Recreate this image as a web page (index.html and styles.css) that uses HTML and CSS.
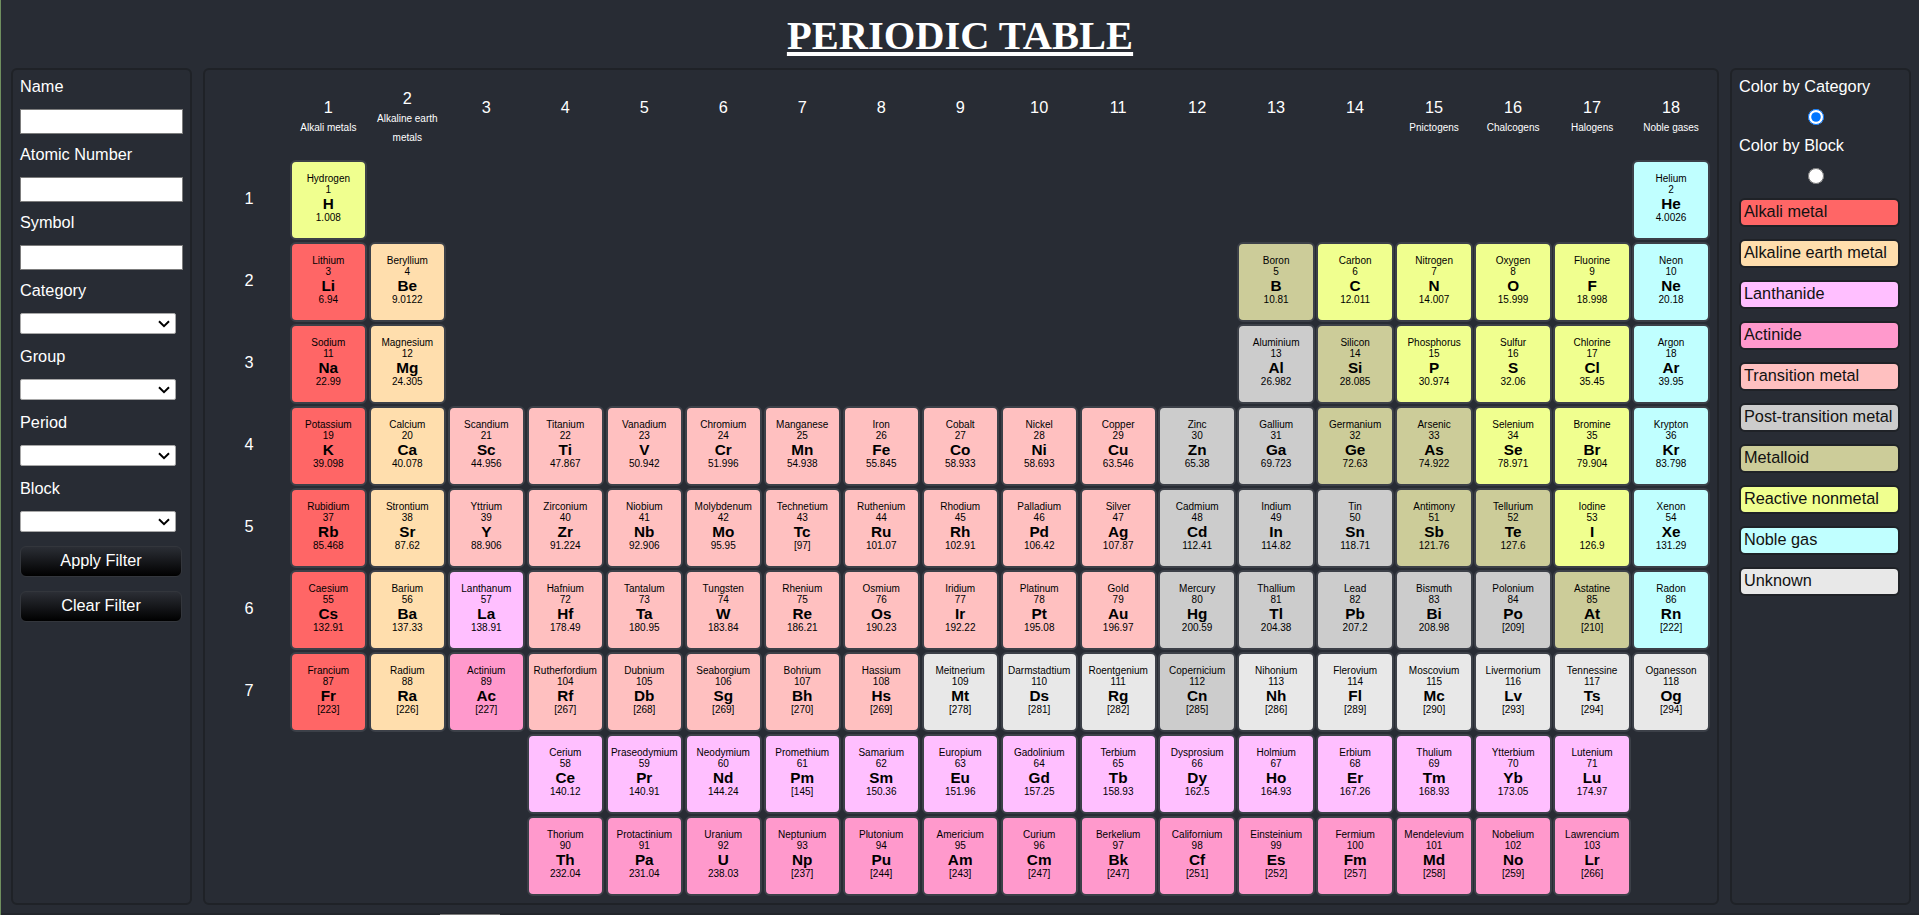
FILE: index.html
```html
<!DOCTYPE html>
<html lang="en">
<head>
<meta charset="utf-8">
<title>Periodic Table</title>
<link rel="stylesheet" href="styles.css">
</head>
<body>
<div class="app">
<h1 class="title">PERIODIC TABLE</h1>
<main class="layout">
<aside class="panel filters">
<label class="flabel">Name</label><input class="tinput" type="text">
<label class="flabel">Atomic Number</label><input class="tinput" type="text">
<label class="flabel">Symbol</label><input class="tinput" type="text">
<label class="flabel">Category</label><select class="sel"><option></option></select>
<label class="flabel slabel">Group</label><select class="sel"><option></option></select>
<label class="flabel slabel">Period</label><select class="sel"><option></option></select>
<label class="flabel slabel">Block</label><select class="sel"><option></option></select>
<button class="btn" type="button">Apply Filter</button>
<button class="btn" type="button">Clear Filter</button>
</aside>
<section class="panel tablepanel">
<div class="ptable">
<div class="gap"></div>
<div class="gh"><span class="gn">1</span><span class="gs">Alkali metals</span></div>
<div class="gh"><span class="gn">2</span><span class="gs">Alkaline earth metals</span></div>
<div class="gh"><span class="gn">3</span><span class="gs"></span></div>
<div class="gh"><span class="gn">4</span><span class="gs"></span></div>
<div class="gh"><span class="gn">5</span><span class="gs"></span></div>
<div class="gh"><span class="gn">6</span><span class="gs"></span></div>
<div class="gh"><span class="gn">7</span><span class="gs"></span></div>
<div class="gh"><span class="gn">8</span><span class="gs"></span></div>
<div class="gh"><span class="gn">9</span><span class="gs"></span></div>
<div class="gh"><span class="gn">10</span><span class="gs"></span></div>
<div class="gh"><span class="gn">11</span><span class="gs"></span></div>
<div class="gh"><span class="gn">12</span><span class="gs"></span></div>
<div class="gh"><span class="gn">13</span><span class="gs"></span></div>
<div class="gh"><span class="gn">14</span><span class="gs"></span></div>
<div class="gh"><span class="gn">15</span><span class="gs">Pnictogens</span></div>
<div class="gh"><span class="gn">16</span><span class="gs">Chalcogens</span></div>
<div class="gh"><span class="gn">17</span><span class="gs">Halogens</span></div>
<div class="gh"><span class="gn">18</span><span class="gs">Noble gases</span></div>

<div class="pn">1</div>
<div class="cell reactive"><span class="nm">Hydrogen</span><span class="nm">1</span><b class="sy">H</b><span class="nm">1.008</span></div>
<div class="gap span16"></div>
<div class="cell noble"><span class="nm">Helium</span><span class="nm">2</span><b class="sy">He</b><span class="nm">4.0026</span></div>

<div class="pn">2</div>
<div class="cell alkali"><span class="nm">Lithium</span><span class="nm">3</span><b class="sy">Li</b><span class="nm">6.94</span></div>
<div class="cell alkaline"><span class="nm">Beryllium</span><span class="nm">4</span><b class="sy">Be</b><span class="nm">9.0122</span></div>
<div class="gap span10"></div>
<div class="cell metalloid"><span class="nm">Boron</span><span class="nm">5</span><b class="sy">B</b><span class="nm">10.81</span></div>
<div class="cell reactive"><span class="nm">Carbon</span><span class="nm">6</span><b class="sy">C</b><span class="nm">12.011</span></div>
<div class="cell reactive"><span class="nm">Nitrogen</span><span class="nm">7</span><b class="sy">N</b><span class="nm">14.007</span></div>
<div class="cell reactive"><span class="nm">Oxygen</span><span class="nm">8</span><b class="sy">O</b><span class="nm">15.999</span></div>
<div class="cell reactive"><span class="nm">Fluorine</span><span class="nm">9</span><b class="sy">F</b><span class="nm">18.998</span></div>
<div class="cell noble"><span class="nm">Neon</span><span class="nm">10</span><b class="sy">Ne</b><span class="nm">20.18</span></div>

<div class="pn">3</div>
<div class="cell alkali"><span class="nm">Sodium</span><span class="nm">11</span><b class="sy">Na</b><span class="nm">22.99</span></div>
<div class="cell alkaline"><span class="nm">Magnesium</span><span class="nm">12</span><b class="sy">Mg</b><span class="nm">24.305</span></div>
<div class="gap span10"></div>
<div class="cell post"><span class="nm">Aluminium</span><span class="nm">13</span><b class="sy">Al</b><span class="nm">26.982</span></div>
<div class="cell metalloid"><span class="nm">Silicon</span><span class="nm">14</span><b class="sy">Si</b><span class="nm">28.085</span></div>
<div class="cell reactive"><span class="nm">Phosphorus</span><span class="nm">15</span><b class="sy">P</b><span class="nm">30.974</span></div>
<div class="cell reactive"><span class="nm">Sulfur</span><span class="nm">16</span><b class="sy">S</b><span class="nm">32.06</span></div>
<div class="cell reactive"><span class="nm">Chlorine</span><span class="nm">17</span><b class="sy">Cl</b><span class="nm">35.45</span></div>
<div class="cell noble"><span class="nm">Argon</span><span class="nm">18</span><b class="sy">Ar</b><span class="nm">39.95</span></div>

<div class="pn">4</div>
<div class="cell alkali"><span class="nm">Potassium</span><span class="nm">19</span><b class="sy">K</b><span class="nm">39.098</span></div>
<div class="cell alkaline"><span class="nm">Calcium</span><span class="nm">20</span><b class="sy">Ca</b><span class="nm">40.078</span></div>
<div class="cell transition"><span class="nm">Scandium</span><span class="nm">21</span><b class="sy">Sc</b><span class="nm">44.956</span></div>
<div class="cell transition"><span class="nm">Titanium</span><span class="nm">22</span><b class="sy">Ti</b><span class="nm">47.867</span></div>
<div class="cell transition"><span class="nm">Vanadium</span><span class="nm">23</span><b class="sy">V</b><span class="nm">50.942</span></div>
<div class="cell transition"><span class="nm">Chromium</span><span class="nm">24</span><b class="sy">Cr</b><span class="nm">51.996</span></div>
<div class="cell transition"><span class="nm">Manganese</span><span class="nm">25</span><b class="sy">Mn</b><span class="nm">54.938</span></div>
<div class="cell transition"><span class="nm">Iron</span><span class="nm">26</span><b class="sy">Fe</b><span class="nm">55.845</span></div>
<div class="cell transition"><span class="nm">Cobalt</span><span class="nm">27</span><b class="sy">Co</b><span class="nm">58.933</span></div>
<div class="cell transition"><span class="nm">Nickel</span><span class="nm">28</span><b class="sy">Ni</b><span class="nm">58.693</span></div>
<div class="cell transition"><span class="nm">Copper</span><span class="nm">29</span><b class="sy">Cu</b><span class="nm">63.546</span></div>
<div class="cell post"><span class="nm">Zinc</span><span class="nm">30</span><b class="sy">Zn</b><span class="nm">65.38</span></div>
<div class="cell post"><span class="nm">Gallium</span><span class="nm">31</span><b class="sy">Ga</b><span class="nm">69.723</span></div>
<div class="cell metalloid"><span class="nm">Germanium</span><span class="nm">32</span><b class="sy">Ge</b><span class="nm">72.63</span></div>
<div class="cell metalloid"><span class="nm">Arsenic</span><span class="nm">33</span><b class="sy">As</b><span class="nm">74.922</span></div>
<div class="cell reactive"><span class="nm">Selenium</span><span class="nm">34</span><b class="sy">Se</b><span class="nm">78.971</span></div>
<div class="cell reactive"><span class="nm">Bromine</span><span class="nm">35</span><b class="sy">Br</b><span class="nm">79.904</span></div>
<div class="cell noble"><span class="nm">Krypton</span><span class="nm">36</span><b class="sy">Kr</b><span class="nm">83.798</span></div>

<div class="pn">5</div>
<div class="cell alkali"><span class="nm">Rubidium</span><span class="nm">37</span><b class="sy">Rb</b><span class="nm">85.468</span></div>
<div class="cell alkaline"><span class="nm">Strontium</span><span class="nm">38</span><b class="sy">Sr</b><span class="nm">87.62</span></div>
<div class="cell transition"><span class="nm">Yttrium</span><span class="nm">39</span><b class="sy">Y</b><span class="nm">88.906</span></div>
<div class="cell transition"><span class="nm">Zirconium</span><span class="nm">40</span><b class="sy">Zr</b><span class="nm">91.224</span></div>
<div class="cell transition"><span class="nm">Niobium</span><span class="nm">41</span><b class="sy">Nb</b><span class="nm">92.906</span></div>
<div class="cell transition"><span class="nm">Molybdenum</span><span class="nm">42</span><b class="sy">Mo</b><span class="nm">95.95</span></div>
<div class="cell transition"><span class="nm">Technetium</span><span class="nm">43</span><b class="sy">Tc</b><span class="nm">[97]</span></div>
<div class="cell transition"><span class="nm">Ruthenium</span><span class="nm">44</span><b class="sy">Ru</b><span class="nm">101.07</span></div>
<div class="cell transition"><span class="nm">Rhodium</span><span class="nm">45</span><b class="sy">Rh</b><span class="nm">102.91</span></div>
<div class="cell transition"><span class="nm">Palladium</span><span class="nm">46</span><b class="sy">Pd</b><span class="nm">106.42</span></div>
<div class="cell transition"><span class="nm">Silver</span><span class="nm">47</span><b class="sy">Ag</b><span class="nm">107.87</span></div>
<div class="cell post"><span class="nm">Cadmium</span><span class="nm">48</span><b class="sy">Cd</b><span class="nm">112.41</span></div>
<div class="cell post"><span class="nm">Indium</span><span class="nm">49</span><b class="sy">In</b><span class="nm">114.82</span></div>
<div class="cell post"><span class="nm">Tin</span><span class="nm">50</span><b class="sy">Sn</b><span class="nm">118.71</span></div>
<div class="cell metalloid"><span class="nm">Antimony</span><span class="nm">51</span><b class="sy">Sb</b><span class="nm">121.76</span></div>
<div class="cell metalloid"><span class="nm">Tellurium</span><span class="nm">52</span><b class="sy">Te</b><span class="nm">127.6</span></div>
<div class="cell reactive"><span class="nm">Iodine</span><span class="nm">53</span><b class="sy">I</b><span class="nm">126.9</span></div>
<div class="cell noble"><span class="nm">Xenon</span><span class="nm">54</span><b class="sy">Xe</b><span class="nm">131.29</span></div>

<div class="pn">6</div>
<div class="cell alkali"><span class="nm">Caesium</span><span class="nm">55</span><b class="sy">Cs</b><span class="nm">132.91</span></div>
<div class="cell alkaline"><span class="nm">Barium</span><span class="nm">56</span><b class="sy">Ba</b><span class="nm">137.33</span></div>
<div class="cell lanthanide"><span class="nm">Lanthanum</span><span class="nm">57</span><b class="sy">La</b><span class="nm">138.91</span></div>
<div class="cell transition"><span class="nm">Hafnium</span><span class="nm">72</span><b class="sy">Hf</b><span class="nm">178.49</span></div>
<div class="cell transition"><span class="nm">Tantalum</span><span class="nm">73</span><b class="sy">Ta</b><span class="nm">180.95</span></div>
<div class="cell transition"><span class="nm">Tungsten</span><span class="nm">74</span><b class="sy">W</b><span class="nm">183.84</span></div>
<div class="cell transition"><span class="nm">Rhenium</span><span class="nm">75</span><b class="sy">Re</b><span class="nm">186.21</span></div>
<div class="cell transition"><span class="nm">Osmium</span><span class="nm">76</span><b class="sy">Os</b><span class="nm">190.23</span></div>
<div class="cell transition"><span class="nm">Iridium</span><span class="nm">77</span><b class="sy">Ir</b><span class="nm">192.22</span></div>
<div class="cell transition"><span class="nm">Platinum</span><span class="nm">78</span><b class="sy">Pt</b><span class="nm">195.08</span></div>
<div class="cell transition"><span class="nm">Gold</span><span class="nm">79</span><b class="sy">Au</b><span class="nm">196.97</span></div>
<div class="cell post"><span class="nm">Mercury</span><span class="nm">80</span><b class="sy">Hg</b><span class="nm">200.59</span></div>
<div class="cell post"><span class="nm">Thallium</span><span class="nm">81</span><b class="sy">Tl</b><span class="nm">204.38</span></div>
<div class="cell post"><span class="nm">Lead</span><span class="nm">82</span><b class="sy">Pb</b><span class="nm">207.2</span></div>
<div class="cell post"><span class="nm">Bismuth</span><span class="nm">83</span><b class="sy">Bi</b><span class="nm">208.98</span></div>
<div class="cell post"><span class="nm">Polonium</span><span class="nm">84</span><b class="sy">Po</b><span class="nm">[209]</span></div>
<div class="cell metalloid"><span class="nm">Astatine</span><span class="nm">85</span><b class="sy">At</b><span class="nm">[210]</span></div>
<div class="cell noble"><span class="nm">Radon</span><span class="nm">86</span><b class="sy">Rn</b><span class="nm">[222]</span></div>

<div class="pn">7</div>
<div class="cell alkali"><span class="nm">Francium</span><span class="nm">87</span><b class="sy">Fr</b><span class="nm">[223]</span></div>
<div class="cell alkaline"><span class="nm">Radium</span><span class="nm">88</span><b class="sy">Ra</b><span class="nm">[226]</span></div>
<div class="cell actinide"><span class="nm">Actinium</span><span class="nm">89</span><b class="sy">Ac</b><span class="nm">[227]</span></div>
<div class="cell transition"><span class="nm">Rutherfordium</span><span class="nm">104</span><b class="sy">Rf</b><span class="nm">[267]</span></div>
<div class="cell transition"><span class="nm">Dubnium</span><span class="nm">105</span><b class="sy">Db</b><span class="nm">[268]</span></div>
<div class="cell transition"><span class="nm">Seaborgium</span><span class="nm">106</span><b class="sy">Sg</b><span class="nm">[269]</span></div>
<div class="cell transition"><span class="nm">Bohrium</span><span class="nm">107</span><b class="sy">Bh</b><span class="nm">[270]</span></div>
<div class="cell transition"><span class="nm">Hassium</span><span class="nm">108</span><b class="sy">Hs</b><span class="nm">[269]</span></div>
<div class="cell unknown"><span class="nm">Meitnerium</span><span class="nm">109</span><b class="sy">Mt</b><span class="nm">[278]</span></div>
<div class="cell unknown"><span class="nm">Darmstadtium</span><span class="nm">110</span><b class="sy">Ds</b><span class="nm">[281]</span></div>
<div class="cell unknown"><span class="nm">Roentgenium</span><span class="nm">111</span><b class="sy">Rg</b><span class="nm">[282]</span></div>
<div class="cell post"><span class="nm">Copernicium</span><span class="nm">112</span><b class="sy">Cn</b><span class="nm">[285]</span></div>
<div class="cell unknown"><span class="nm">Nihonium</span><span class="nm">113</span><b class="sy">Nh</b><span class="nm">[286]</span></div>
<div class="cell unknown"><span class="nm">Flerovium</span><span class="nm">114</span><b class="sy">Fl</b><span class="nm">[289]</span></div>
<div class="cell unknown"><span class="nm">Moscovium</span><span class="nm">115</span><b class="sy">Mc</b><span class="nm">[290]</span></div>
<div class="cell unknown"><span class="nm">Livermorium</span><span class="nm">116</span><b class="sy">Lv</b><span class="nm">[293]</span></div>
<div class="cell unknown"><span class="nm">Tennessine</span><span class="nm">117</span><b class="sy">Ts</b><span class="nm">[294]</span></div>
<div class="cell unknown"><span class="nm">Oganesson</span><span class="nm">118</span><b class="sy">Og</b><span class="nm">[294]</span></div>

<div class="gap span4"></div>
<div class="cell lanthanide"><span class="nm">Cerium</span><span class="nm">58</span><b class="sy">Ce</b><span class="nm">140.12</span></div>
<div class="cell lanthanide"><span class="nm">Praseodymium</span><span class="nm">59</span><b class="sy">Pr</b><span class="nm">140.91</span></div>
<div class="cell lanthanide"><span class="nm">Neodymium</span><span class="nm">60</span><b class="sy">Nd</b><span class="nm">144.24</span></div>
<div class="cell lanthanide"><span class="nm">Promethium</span><span class="nm">61</span><b class="sy">Pm</b><span class="nm">[145]</span></div>
<div class="cell lanthanide"><span class="nm">Samarium</span><span class="nm">62</span><b class="sy">Sm</b><span class="nm">150.36</span></div>
<div class="cell lanthanide"><span class="nm">Europium</span><span class="nm">63</span><b class="sy">Eu</b><span class="nm">151.96</span></div>
<div class="cell lanthanide"><span class="nm">Gadolinium</span><span class="nm">64</span><b class="sy">Gd</b><span class="nm">157.25</span></div>
<div class="cell lanthanide"><span class="nm">Terbium</span><span class="nm">65</span><b class="sy">Tb</b><span class="nm">158.93</span></div>
<div class="cell lanthanide"><span class="nm">Dysprosium</span><span class="nm">66</span><b class="sy">Dy</b><span class="nm">162.5</span></div>
<div class="cell lanthanide"><span class="nm">Holmium</span><span class="nm">67</span><b class="sy">Ho</b><span class="nm">164.93</span></div>
<div class="cell lanthanide"><span class="nm">Erbium</span><span class="nm">68</span><b class="sy">Er</b><span class="nm">167.26</span></div>
<div class="cell lanthanide"><span class="nm">Thulium</span><span class="nm">69</span><b class="sy">Tm</b><span class="nm">168.93</span></div>
<div class="cell lanthanide"><span class="nm">Ytterbium</span><span class="nm">70</span><b class="sy">Yb</b><span class="nm">173.05</span></div>
<div class="cell lanthanide"><span class="nm">Lutenium</span><span class="nm">71</span><b class="sy">Lu</b><span class="nm">174.97</span></div>
<div class="gap"></div>

<div class="gap span4"></div>
<div class="cell actinide"><span class="nm">Thorium</span><span class="nm">90</span><b class="sy">Th</b><span class="nm">232.04</span></div>
<div class="cell actinide"><span class="nm">Protactinium</span><span class="nm">91</span><b class="sy">Pa</b><span class="nm">231.04</span></div>
<div class="cell actinide"><span class="nm">Uranium</span><span class="nm">92</span><b class="sy">U</b><span class="nm">238.03</span></div>
<div class="cell actinide"><span class="nm">Neptunium</span><span class="nm">93</span><b class="sy">Np</b><span class="nm">[237]</span></div>
<div class="cell actinide"><span class="nm">Plutonium</span><span class="nm">94</span><b class="sy">Pu</b><span class="nm">[244]</span></div>
<div class="cell actinide"><span class="nm">Americium</span><span class="nm">95</span><b class="sy">Am</b><span class="nm">[243]</span></div>
<div class="cell actinide"><span class="nm">Curium</span><span class="nm">96</span><b class="sy">Cm</b><span class="nm">[247]</span></div>
<div class="cell actinide"><span class="nm">Berkelium</span><span class="nm">97</span><b class="sy">Bk</b><span class="nm">[247]</span></div>
<div class="cell actinide"><span class="nm">Californium</span><span class="nm">98</span><b class="sy">Cf</b><span class="nm">[251]</span></div>
<div class="cell actinide"><span class="nm">Einsteinium</span><span class="nm">99</span><b class="sy">Es</b><span class="nm">[252]</span></div>
<div class="cell actinide"><span class="nm">Fermium</span><span class="nm">100</span><b class="sy">Fm</b><span class="nm">[257]</span></div>
<div class="cell actinide"><span class="nm">Mendelevium</span><span class="nm">101</span><b class="sy">Md</b><span class="nm">[258]</span></div>
<div class="cell actinide"><span class="nm">Nobelium</span><span class="nm">102</span><b class="sy">No</b><span class="nm">[259]</span></div>
<div class="cell actinide"><span class="nm">Lawrencium</span><span class="nm">103</span><b class="sy">Lr</b><span class="nm">[266]</span></div>
</div>
</section>
<aside class="panel legend">
<label class="flabel">Color by Category</label>
<div class="radiorow"><input class="radio" type="radio" name="colorby" checked></div>
<label class="flabel">Color by Block</label>
<div class="radiorow"><input class="radio" type="radio" name="colorby"></div>
<div class="key alkali first">Alkali metal</div>
<div class="key alkaline">Alkaline earth metal</div>
<div class="key lanthanide">Lanthanide</div>
<div class="key actinide">Actinide</div>
<div class="key transition">Transition metal</div>
<div class="key post">Post-transition metal</div>
<div class="key metalloid">Metalloid</div>
<div class="key reactive">Reactive nonmetal</div>
<div class="key noble">Noble gas</div>
<div class="key unknown">Unknown</div>
</aside>
</main>
</div>
<div class="pagebar"><div class="pagethumb"></div></div>
</body>
</html>
```
FILE: styles.css
```css
* { box-sizing: border-box; }
html, body { margin: 0; height: 100%; }
body {
  position: relative;
  background: #282c34;
  color: #fff;
  font-family: "Liberation Sans", Arial, sans-serif;
  font-size: 16.3px;
  overflow: hidden;
  border-left: 1px solid #6f8f5f;
}
.app { display: flex; flex-direction: column; height: 915px; }
.title {
  margin: 0;
  height: 68px;
  padding-top: 13px;
  text-align: center;
  font-family: "Liberation Serif", "Times New Roman", serif;
  font-size: 40.5px;
  font-weight: 700;
  line-height: 46px;
  text-decoration: underline;
  text-decoration-thickness: 4px;
  text-underline-offset: 3px;
}
.layout {
  flex: 1;
  display: grid;
  grid-template-columns: 180.5px 1516px 181px;
  column-gap: 11px;
  padding: 0 0 10px 10px;
  min-height: 0;
}
.panel { border: 2px solid #1f2227; border-radius: 6px; }
.filters { display: flex; flex-direction: column; align-items: flex-start; padding: 8px 7px 0; }
.flabel { display: block; line-height: 16px; height: 18px; }
.tinput {
  display: block;
  width: 163px;
  height: 25px;
  margin: 13px 0 12px;
  padding: 1px 2px;
  background: #fff;
  border: 1px solid #7c7c7c;
  border-radius: 0;
}
.sel {
  display: block;
  width: 156px;
  height: 21px;
  margin: 13px 0 0;
  padding: 0 2px;
  color: #000;
  -webkit-appearance: none;
  appearance: none;
  background-color: #fff;
  background-image: url("data:image/svg+xml;utf8,<svg xmlns='http://www.w3.org/2000/svg' width='12' height='8' viewBox='0 0 12 8'><path d='M1 1.2 L6 6.2 L11 1.2' fill='none' stroke='black' stroke-width='2'/></svg>");
  background-repeat: no-repeat;
  background-position: right 5.5px center;
  border: 1px solid #a8a8a8;
  border-radius: 2px;
}
.slabel { margin-top: 14px; }
.btn {
  display: block;
  width: 162px;
  height: 31px;
  margin-top: 14px;
  padding: 0 0 2px;
  color: #fff;
  font-family: inherit;
  font-size: 16.3px;
  background: linear-gradient(#2b2e35, #000);
  border: 1px solid #33363c;
  border-radius: 6px;
}
.tablepanel { padding: 7px 0 0 5.5px; }
.ptable {
  display: grid;
  grid-template-columns: 78px repeat(18, 77.33px);
  grid-template-rows: 81px repeat(9, 80px);
  column-gap: 1.67px;
  row-gap: 2px;
}
.gap { min-width: 0; }
.span16 { grid-column: span 16; }
.span10 { grid-column: span 10; }
.span4 { grid-column: span 4; }
.gh { align-self: center; display: flex; flex-direction: column; align-items: center; text-align: center; padding-bottom: 1px; }
.gn { line-height: 21px; }
.gs { font-size: 10px; line-height: 19px; min-height: 19px; display: block; padding: 0 6px; }
.pn { align-self: center; text-align: center; padding-bottom: 3px; }
.cell {
  display: flex;
  flex-direction: column;
  align-items: center;
  padding-top: 11px;
  border: 2px solid #3c4048;
  border-radius: 6px;
  color: #000;
  white-space: nowrap;
}
.nm { font-size: 10px; line-height: 11px; }
.sy { font-size: 15.3px; line-height: 17px; font-weight: 700; }
.legend { padding: 8px 9px 0 7.5px; }
.radiorow { display: flex; justify-content: center; padding-right: 6px; height: 41px; align-items: center; }
.radio { width: 16px; height: 16px; margin: 0; }
.key {
  height: 29px;
  margin-top: 12px;
  padding: 0 3px;
  border: 2px solid #1f2227;
  border-radius: 6px;
  color: #111;
  line-height: 23px;
  white-space: nowrap;
}
.key.first { margin-top: 2px; }
.alkali { background: #ff6666; }
.alkaline { background: #ffdead; }
.lanthanide { background: #ffbfff; }
.actinide { background: #ff99cc; }
.transition { background: #ffc0c0; }
.post { background: #cccccc; }
.metalloid { background: #cccc99; }
.reactive { background: #f0ff8f; }
.noble { background: #c0ffff; }
.unknown { background: #e8e8e8; }
.pagebar { position: absolute; left: -1px; right: 0; bottom: 0; height: 2px; background: #23262c; }
.pagethumb { position: absolute; left: 440px; width: 60px; top: 1px; height: 1px; background: #7a7a7a; }
```
